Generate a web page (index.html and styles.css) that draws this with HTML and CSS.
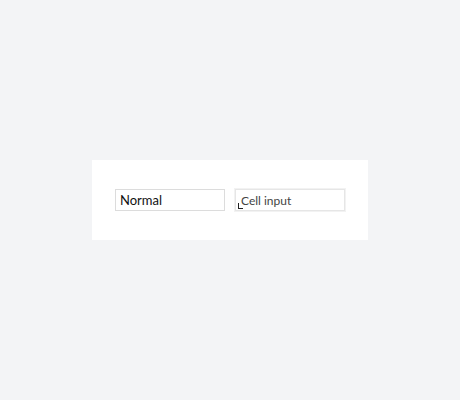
FILE: index.html
```html
<!DOCTYPE html>
<html>
<head>
<meta charset="utf-8">
<link rel="stylesheet" href="styles.css">
</head>
<body>
<div class="card">
  <div class="field normal">Normal</div>
  <div class="field cell"><span class="corner"></span>Cell input</div>
</div>
</body>
</html>
```
FILE: styles.css
```css
html, body {
  margin: 0;
  height: 100%;
}
body {
  background: #f3f4f6;
  display: flex;
  align-items: center;
  justify-content: center;
  font-family: Lato, "Noto Sans", sans-serif;
}
.card {
  background: #ffffff;
  width: 276px;
  height: 80px;
  box-sizing: border-box;
  padding: 0 23px;
  display: flex;
  align-items: center;
  gap: 10px;
}
.field {
  width: 110px;
  height: 22px;
  box-sizing: border-box;
  display: flex;
  align-items: center;
  position: relative;
}
.normal {
  border: 1px solid #dcdcdc;
  padding-left: 4px;
  font-size: 13px;
  color: #111;
}
.cell {
  border: 1px solid #e6e6e6;
  outline: 1px solid #f2f2f2;
  padding-left: 5px;
  font-size: 12px;
  color: #444;
}
.corner {
  position: absolute;
  left: 2px;
  top: 13px;
  width: 4px;
  height: 5px;
  border-left: 1px solid #222;
  border-bottom: 1px solid #222;
}
```
